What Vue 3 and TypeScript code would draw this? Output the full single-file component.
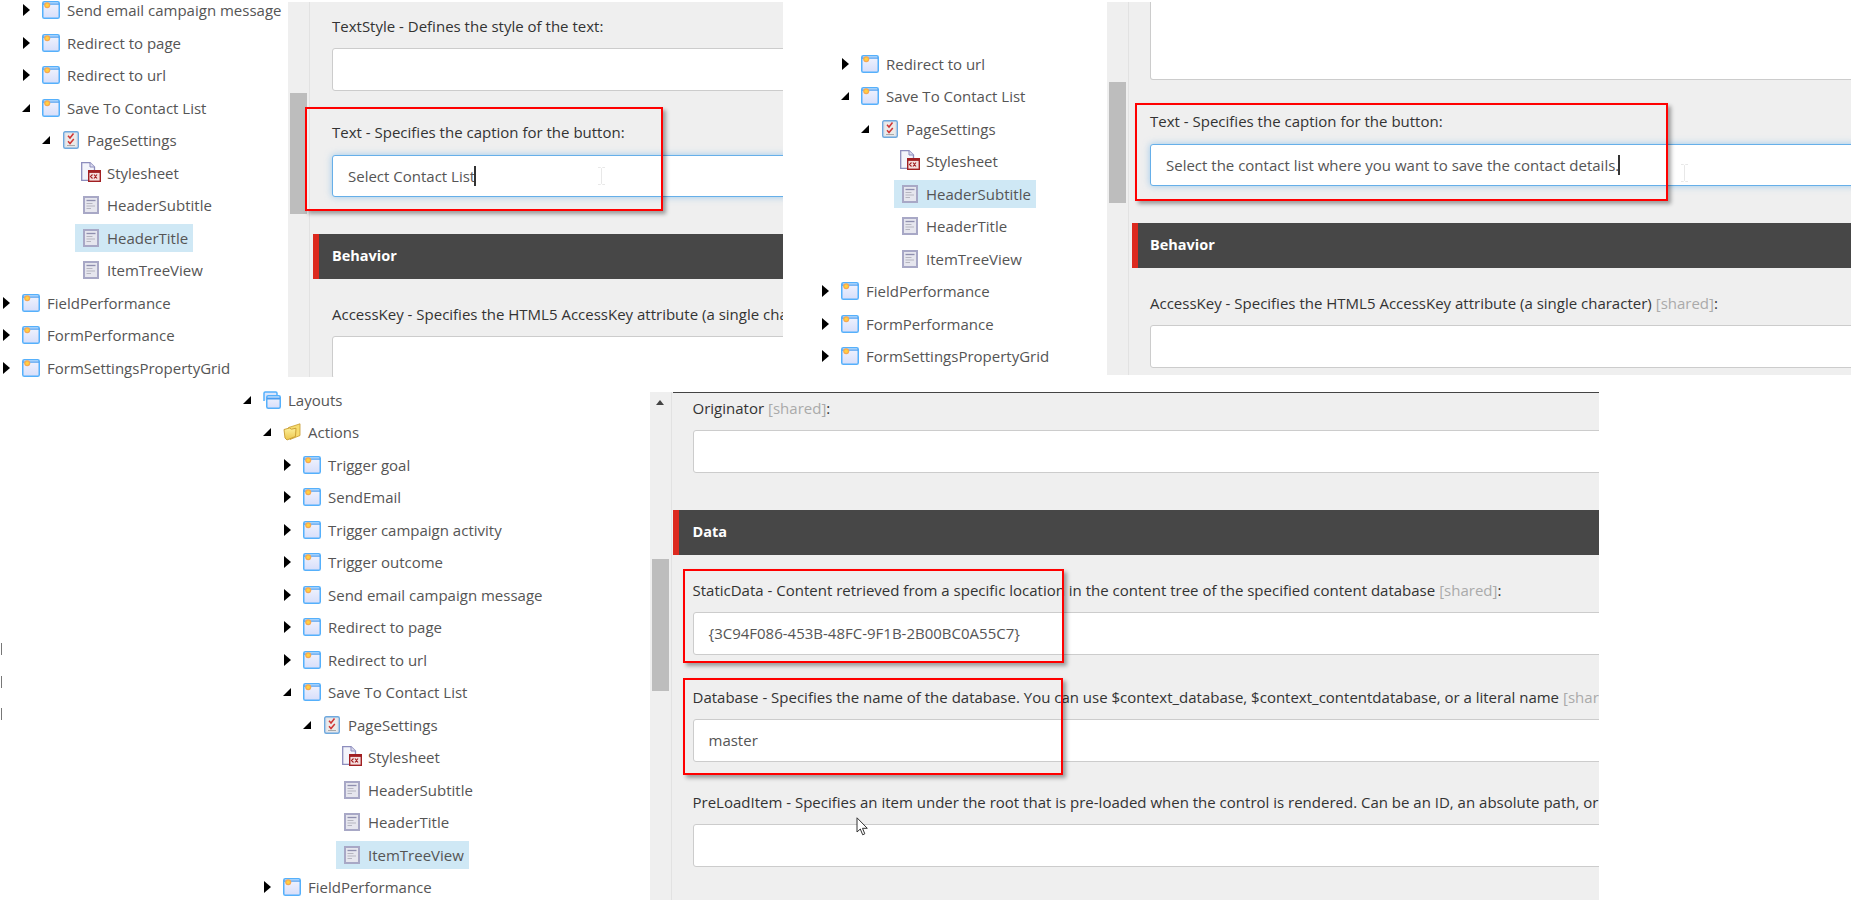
<script setup lang="ts">
interface Row { label: string; level: number; icon: string; state?: 'open' | 'closed'; selected?: boolean }
interface Block { kind: 'field' | 'cut' | 'bar'; label?: string; shared?: boolean; value?: string; focus?: boolean; gap: number; height?: number }
interface Box { left: number; top: number; width: number; height: number }
interface Beam { left: number; top: number }
interface Win {
  id: string; left: number; top: number; width: number; height: number;
  treeWidth: number; treeTop: number; treePad: number; formTop: number; formHeight: number;
  thumbTop: number; thumbHeight: number; thumbLeft: number; arrow: boolean; pad: number; rows: Row[]; blocks: Block[]; boxes: Box[]; beam?: Beam
}

const w = (label: string, level: number, state?: 'open' | 'closed', selected = false): Row => ({ label, level, icon: 'win', state, selected })
const h = (label: string, level: number, selected = false): Row => ({ label, level, icon: 'hdr', selected })

const subtree = (sel: string, lvl: number): Row[] => [
  w('Save To Contact List', lvl, 'open'),
  { label: 'PageSettings', level: lvl + 1, icon: 'page', state: 'open' },
  { label: 'Stylesheet', level: lvl + 2, icon: 'css' },
  h('HeaderSubtitle', lvl + 2, sel === 'HeaderSubtitle'),
  h('HeaderTitle', lvl + 2, sel === 'HeaderTitle'),
  h('ItemTreeView', lvl + 2, sel === 'ItemTreeView'),
]

const accessKey: Block[] = [
  { kind: 'bar', label: 'Behavior', gap: 25 },
  { kind: 'field', label: 'AccessKey - Specifies the HTML5 AccessKey attribute (a single character)', shared: true, gap: 0 },
]

const windows: Win[] = [
  {
    id: 'a', left: 0, top: 0, width: 783, height: 384, treeWidth: 288, treeTop: -6.25, treePad: 0,
    formTop: 2, formHeight: 375, thumbTop: 91, thumbHeight: 121, thumbLeft: 2, arrow: false, pad: 19,
    rows: [
      w('Send email campaign message', 1, 'closed'),
      w('Redirect to page', 1, 'closed'),
      w('Redirect to url', 1, 'closed'),
      ...subtree('HeaderTitle', 1),
      w('FieldPerformance', 0, 'closed'),
      w('FormPerformance', 0, 'closed'),
      w('FormSettingsPropertyGrid', 0, 'closed'),
    ],
    blocks: [
      { kind: 'field', label: 'TextStyle - Defines the style of the text:', gap: 31 },
      { kind: 'field', label: 'Text - Specifies the caption for the button:', value: 'Select Contact List', focus: true, gap: 37 },
      ...accessKey,
    ],
    boxes: [{ left: 305, top: 107, width: 358, height: 104 }],
    beam: { left: 597, top: 167 },
  },
  {
    id: 'b', left: 783, top: 0, width: 1068, height: 384, treeWidth: 324, treeTop: 47.25, treePad: 36,
    formTop: 2, formHeight: 373, thumbTop: 80, thumbHeight: 121, thumbLeft: 2, arrow: false, pad: 18,
    rows: [
      w('Redirect to url', 1, 'closed'),
      ...subtree('HeaderSubtitle', 1),
      w('FieldPerformance', 0, 'closed'),
      w('FormPerformance', 0, 'closed'),
      w('FormSettingsPropertyGrid', 0, 'closed'),
    ],
    blocks: [
      { kind: 'cut', gap: 31, height: 78 },
      { kind: 'field', label: 'Text - Specifies the caption for the button:', value: 'Select the contact list where you want to save the contact details.', focus: true, gap: 37 },
      ...accessKey,
    ],
    boxes: [{ left: 351.5, top: 103, width: 533, height: 98 }],
    beam: { left: 897, top: 164 },
  },
  {
    id: 'c', left: 0, top: 384, width: 1599, height: 520, treeWidth: 650, treeTop: -0.5, treePad: 241,
    formTop: 8, formHeight: 508, thumbTop: 167, thumbHeight: 132, thumbLeft: 1.5, arrow: true, pad: 19.5,
    rows: [
      { label: 'Layouts', level: 0, icon: 'layouts', state: 'open' },
      { label: 'Actions', level: 1, icon: 'folder', state: 'open' },
      w('Trigger goal', 2, 'closed'),
      w('SendEmail', 2, 'closed'),
      w('Trigger campaign activity', 2, 'closed'),
      w('Trigger outcome', 2, 'closed'),
      w('Send email campaign message', 2, 'closed'),
      w('Redirect to page', 2, 'closed'),
      w('Redirect to url', 2, 'closed'),
      ...subtree('ItemTreeView', 2),
      w('FieldPerformance', 1, 'closed'),
    ],
    blocks: [
      { kind: 'field', label: 'Originator', shared: true, gap: 37 },
      { kind: 'bar', label: 'Data', gap: 25 },
      { kind: 'field', label: 'StaticData - Content retrieved from a specific location in the content tree of the specified content database', shared: true, value: '{3C94F086-453B-48FC-9F1B-2B00BC0A55C7}', gap: 32 },
      { kind: 'field', label: 'Database - Specifies the name of the database. You can use $context_database, $context_contentdatabase, or a literal name', shared: true, value: 'master', gap: 30 },
      { kind: 'field', label: 'PreLoadItem - Specifies an item under the root that is pre-loaded when the control is rendered. Can be an ID, an absolute path, or a relative path', gap: 0 },
    ],
    boxes: [
      { left: 683, top: 185, width: 381, height: 94 },
      { left: 683, top: 294, width: 380, height: 97 },
    ],
  },
]
</script>

<template>
  <div class="stage">
    <svg class="defs" width="0" height="0" aria-hidden="true">
      <defs>
        <linearGradient id="winFill" x1="0" y1="0" x2="0" y2="1">
          <stop offset="0" stop-color="#f2f4fe" />
          <stop offset="1" stop-color="#d7defa" />
        </linearGradient>
        <linearGradient id="folderFill" x1="0" y1="0" x2="0" y2="1">
          <stop offset="0" stop-color="#fdf09a" />
          <stop offset="1" stop-color="#ecc54a" />
        </linearGradient>
        <symbol id="win" viewBox="0 0 18 18">
          <rect x=".75" y=".75" width="16.5" height="16.5" rx="1.6" fill="url(#winFill)" stroke="#55b0fb" stroke-width="1.5" />
          <rect x="1" y="2.4" width="16" height="1.3" fill="#4a9df0" />
          <circle cx="5.2" cy="4.2" r="3" fill="#f8a850" />
          <circle cx="5.2" cy="4.2" r="1.7" fill="#ffd23f" />
        </symbol>
        <symbol id="layouts" viewBox="0 0 18 18">
          <path d="M1 10V2.2C1 1.500 1.500 1 2.200 1H12.800C13.500 1 14 1.500 14 2.200V4" fill="#dbe6fc" stroke="#55b0fb" stroke-width="1.500" />
          <rect x="3.750" y="4.750" width="13.500" height="12.500" rx="1.500" fill="url(#winFill)" stroke="#55b0fb" stroke-width="1.500" />
          <rect x="4" y="6.500" width="13" height="2" fill="#4a9df0" />
        </symbol>
        <symbol id="folder" viewBox="0 0 18 18">
          <path d="M5.500 4.500 11 2.800 17 .8V12.500L7 16.500Z" fill="#f7dc70" stroke="#c69a2e" stroke-width=".8" />
          <path d="M1 6.500 6.500 5 8.500 6.200 13 5.200 12.500 13.500 4 17 2 15Z" fill="url(#folderFill)" stroke="#c69a2e" stroke-width=".9" />
        </symbol>
        <symbol id="page" viewBox="0 0 18 18">
          <rect x="1.700" y=".7" width="14.600" height="16.600" rx="1.500" fill="#dfe2ea" stroke="#6fa9de" stroke-width="1.400" />
          <rect x="4" y="2.500" width="10" height="13" fill="#eceae8" />
          <path d="M6 4.800 8 7 11.500 2.500" fill="none" stroke="#cf3535" stroke-width="1.500" />
          <path d="M6 10.300 8 12.500 11.800 8" fill="none" stroke="#cf3535" stroke-width="1.500" />
          <path d="M5 14.500H13" stroke="#a9a9a9" stroke-width="1" />
        </symbol>
        <symbol id="css" viewBox="0 0 20 20">
          <path d="M.7.7H9L13.500 5V18.300H.7Z" fill="#f3f4fb" stroke="#8d8dbd" stroke-width="1.300" />
          <path d="M9 .7V5H13.500" fill="#dcdcef" stroke="#8d8dbd" stroke-width="1" />
          <rect x="7.700" y="8.700" width="11.600" height="10.600" fill="#f4dede" stroke="#a11f22" stroke-width="1.400" />
          <rect x="7.700" y="8.700" width="11.600" height="2.200" fill="#a11f22" />
          <path d="M11.500 12.500 9.500 14.500 11.500 16.500M13 12.500 16 16.500M16 12.500 13 16.500" fill="none" stroke="#a11f22" stroke-width="1.100" />
        </symbol>
        <symbol id="hdr" viewBox="0 0 18 18">
          <rect x="2" y="1" width="14" height="16" fill="#e6e6ee" stroke="#a8a8c6" stroke-width="2" />
          <path d="M4.500 4.500H13.500" stroke="#8f8fae" stroke-width="1.300" />
          <path d="M4.500 7.500H10.500M4.500 10H13M4.500 12.500H9" stroke="#b5b5bf" stroke-width="1.200" />
        </symbol>
      </defs>
    </svg>

    <section
      v-for="win in windows"
      :key="win.id"
      class="window"
      :style="{ left: win.left + 'px', top: win.top + 'px', width: win.width + 'px', height: win.height + 'px' }"
    >
      <ul class="tree" :style="{ width: win.treeWidth + 'px', marginTop: win.treeTop + 'px', paddingLeft: win.treePad + 'px' }">
        <li v-for="(row, i) in win.rows" :key="i" class="row" :style="{ marginLeft: 2 + row.level * 20 + 'px' }">
          <span class="exp">
            <i v-if="row.state === 'closed'" class="tri-right"></i>
            <i v-else-if="row.state === 'open'" class="tri-open"></i>
          </span>
          <span class="node" :class="{ selected: row.selected }">
            <svg class="ico" :class="row.icon" aria-hidden="true"><use :href="'#' + row.icon" /></svg>
            <span class="txt">{{ row.label }}</span>
          </span>
        </li>
      </ul>

      <div class="form" :style="{ marginTop: win.formTop + 'px', height: win.formHeight + 'px' }">
        <div class="track">
          <i v-if="win.arrow" class="up"></i>
          <div class="thumb" :style="{ marginTop: win.thumbTop + 'px', height: win.thumbHeight + 'px', marginLeft: win.thumbLeft + 'px' }"></div>
        </div>
        <div class="content" :class="[win.id]">
          <template v-for="(b, i) in win.blocks" :key="i">
            <h3 v-if="b.kind === 'bar'" class="bar" :style="{ marginBottom: b.gap + 'px', paddingLeft: win.pad - 6 + 'px' }">{{ b.label }}</h3>
            <div v-else class="field" :class="{ 'has-focus': b.focus }" :style="{ marginBottom: b.gap + 'px', marginLeft: win.pad + 'px' }">
              <label v-if="b.kind === 'field'" class="lab">{{ b.label }}<em v-if="b.shared">[shared]</em><template v-if="b.label && !b.label.endsWith(':')">:</template></label>
              <div class="input" :class="{ focus: b.focus, cut: b.kind === 'cut' }" :style="b.height ? { height: b.height + 'px' } : undefined">
                <span v-if="b.value">{{ b.value }}</span><i v-if="b.focus" class="caret"></i>
              </div>
            </div>
          </template>
        </div>
      </div>

      <div v-for="(box, i) in win.boxes" :key="i" class="mark"
        :style="{ left: box.left + 'px', top: box.top + 'px', width: box.width + 'px', height: box.height + 'px' }"></div>

      <svg v-if="win.beam" class="beam" width="9" height="18" viewBox="0 0 9 18" :style="{ left: win.beam.left + 'px', top: win.beam.top + 'px' }" aria-hidden="true">
        <path d="M1 .5H3.500L4.500 1.500 5.500 .5H8M4.500 1.500V16.500M1 17.500H3.500L4.500 16.500 5.500 17.500H8" fill="none" stroke="#e8e8e8" />
      </svg>
    </section>

    <svg class="pointer" width="13" height="19" viewBox="0 0 13 19" aria-hidden="true">
      <path d="M1 .8V15L4.300 12 6.700 17.800 8.800 16.800 6.500 11.300H11.300Z" fill="#fff" stroke="#333" stroke-width="1" />
    </svg>

    <i class="tick t1"></i><i class="tick t2"></i><i class="tick t3"></i>
  </div>
</template>

<style scoped>
.stage { position: relative; width: 1851px; height: 904px; overflow: hidden; background: #fff; font-family: "Open Sans", sans-serif; font-size: 15px; color: #333; }
.defs { position: absolute; }
.window { position: absolute; display: flex; align-items: flex-start; overflow: hidden; }
.tree { list-style: none; margin: 0; padding: 0; box-sizing: border-box; flex: none; }
.row { display: flex; align-items: center; height: 32.5px; white-space: nowrap; }
.exp { flex: none; width: 20px; display: flex; align-items: center; }
.tri-right { display: block; width: 0; height: 0; margin-left: 1px; border-left: 7px solid #000; border-top: 6px solid transparent; border-bottom: 6px solid transparent; }
.tri-open { display: block; width: 0; height: 0; border-right: 8px solid #000; border-top: 8px solid transparent; }
.node { display: inline-flex; align-items: center; height: 28px; padding: 0 5px 0 7px; margin-left: -7px; gap: 7px; color: #555; }
.node.selected { background: #cfe8f5; }
.ico { width: 18px; height: 18px; flex: none; display: block; }
.ico.css { width: 20px; height: 20px; margin: 0 -2px 0 0; transform: translate(-1px, -1px); }
.form { flex: 1; min-width: 0; display: flex; background: #efefef; overflow: hidden; position: relative; }
.track { flex: none; width: 21px; position: relative; border-right: 1px solid #e2e2e2; }
.thumb { width: 17px; background: #bdbdbd; }
.up { position: absolute; left: 6px; top: 8px; width: 0; height: 0; border-left: 4.500px solid transparent; border-right: 4.500px solid transparent; border-bottom: 5px solid #444; }
.content { flex: 1; min-width: 0; margin-left: 3px; }
.content.a { padding-top: 14px; }
.content.c { margin-left: 1px; padding-top: 6px; box-shadow: inset 0 1px 0 #444; }
.field { min-width: 0; }
.lab { display: block; height: 20px; line-height: 20px; margin-bottom: 12px; white-space: nowrap; color: #333; }
.has-focus .lab { margin-bottom: 13px; }
.lab em { font-style: normal; color: #aaa; margin-left: 4px; }
.input { box-sizing: border-box; height: 43px; margin-right: -6px; padding: 0 15px 1px; display: flex; align-items: center; background: #fff; border: 1px solid #ccc; border-radius: 3px; color: #555; white-space: nowrap; }
.input.focus { height: 42px; border-color: #66afe9; box-shadow: 0 0 7px rgba(102, 175, 233, .6); }
.input.cut { border-top: 0; border-radius: 0 0 0 3px; }
.caret { display: block; width: 2px; height: 20px; background: #333; margin-left: -1px; flex: none; }
.bar { margin: 0; height: 45px; line-height: 43px; box-sizing: border-box; background: #474747; border-left: 6px solid #dc291e; color: #fff; font-size: 14.500px; font-weight: 700; }
.mark { position: absolute; box-sizing: border-box; border: 2px solid #f00; box-shadow: 3px 3px 4px rgba(0, 0, 0, .35); }
.beam { position: absolute; }
.pointer { position: absolute; left: 856px; top: 817px; }
.tick { position: absolute; left: 1px; width: 1px; height: 12px; background: #777; }
.t1 { top: 643px; }
.t2 { top: 676px; }
.t3 { top: 708px; }
</style>

<style>
body { margin: 0; background: #fff; }
</style>
